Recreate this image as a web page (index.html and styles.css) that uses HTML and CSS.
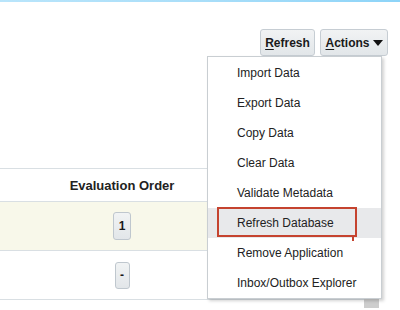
FILE: index.html
```html
<!DOCTYPE html>
<html lang="en">
<head>
    <meta charset="UTF-8">
    <title>Application Actions</title>
    <link rel="stylesheet" href="styles.css">
</head>
<body>
    <div class="topbar"></div>
    <div class="toolbar">
        <button class="tb-btn refresh"><span><u>R</u>efresh</span></button>
        <div class="actions-wrap">
            <button class="tb-btn actions"><span><u>A</u>ctions</span>
                <svg class="caret" width="10" height="6" viewBox="0 0 10 6"><path d="M0 0H10L5 6Z" fill="#111"/></svg>
            </button>
            <ul class="menu">
                <li>Import Data</li>
                <li>Export Data</li>
                <li>Copy Data</li>
                <li>Clear Data</li>
                <li>Validate Metadata</li>
                <li class="hover">Refresh Database<span class="callout"></span></li>
                <li>Remove Application</li>
                <li>Inbox/Outbox Explorer</li>
            </ul>
        </div>
    </div>
    <div class="table-area">
        <div class="table">
            <div class="row head">
                <div class="cell first"></div>
                <div class="cell order">Evaluation Order</div>
                <div class="cell rest"></div>
            </div>
            <div class="row selected">
                <div class="cell first"></div>
                <div class="cell order"><button class="ord-btn">1</button></div>
                <div class="cell rest"></div>
            </div>
            <div class="row">
                <div class="cell first"></div>
                <div class="cell order"><button class="ord-btn dash">-</button></div>
                <div class="cell rest"></div>
            </div>
        </div>
        <div class="scrollbar"><div class="thumb"></div></div>
    </div>
</body>
</html>
```

FILE: styles.css
```css
body {
    margin: 0;
    font-family: "Liberation Sans", Arial, sans-serif;
    color: #222;
    background: #fff;
    overflow: hidden;
}
.topbar {
    height: 2px;
    background: linear-gradient(to right, #b9e5fb, #a9def9 50%, #8dd4f8);
}
.toolbar {
    display: flex;
    justify-content: flex-end;
    gap: 5px;
    padding: 27px 12px 0 0;
}
.tb-btn {
    height: 27px;
    padding: 0;
    font-family: inherit;
    font-size: 12px;
    font-weight: bold;
    color: #1a1a1a;
    background: linear-gradient(#f1f3f4, #e2e6e9);
    border: 1px solid #c6cdd3;
    border-radius: 3px;
    display: flex;
    align-items: center;
    justify-content: center;
}
.tb-btn.refresh {
    width: 55px;
}
.tb-btn.actions {
    width: 68px;
}
.tb-btn u {
    text-decoration-thickness: 1px;
    text-underline-offset: 2px;
}
.actions-wrap {
    position: relative;
}
.caret {
    margin: 1px 0 0 3px;
}
.menu {
    position: absolute;
    top: 100%;
    right: 6px;
    width: 175px;
    box-sizing: border-box;
    margin: 0;
    padding: 1px 0 0;
    list-style: none;
    background: #fff;
    border: 1px solid #c9ced2;
    box-shadow: 2px 2px 3px rgba(0, 0, 0, 0.18);
    z-index: 10;
}
.menu li {
    position: relative;
    height: 30px;
    line-height: 30px;
    padding-left: 29px;
    font-size: 12px;
    white-space: nowrap;
}
.menu li.hover {
    background: #e8e9eb;
}
.callout {
    position: absolute;
    left: 9px;
    top: -1px;
    width: 140px;
    height: 30px;
    box-sizing: border-box;
    border: 2px solid #c5432f;
}
.callout::after {
    content: "";
    position: absolute;
    right: 1px;
    bottom: -6px;
    width: 2px;
    height: 5px;
    background: #c5432f;
}
.table-area {
    display: flex;
    margin-top: 112px;
}
.table {
    width: 364px;
}
.row {
    display: flex;
    height: 48px;
    border-bottom: 1px solid #d9dfe3;
}
.row.head {
    height: 32px;
    border-top: 1px solid #d9dfe3;
}
.row.selected {
    background: #f8f8ea;
}
.cell {
    display: flex;
    align-items: center;
    justify-content: center;
}
.cell.first {
    width: 36px;
}
.cell.order {
    width: 172px;
    font-size: 13px;
    font-weight: bold;
}
.cell.rest {
    flex: 1;
}
.ord-btn {
    height: 28px;
    width: 18px;
    padding: 0;
    font-family: inherit;
    font-size: 12px;
    font-weight: bold;
    color: #1a1a1a;
    background: linear-gradient(#f1f3f4, #e2e6e9);
    border: 1px solid #bfc7ce;
    border-radius: 3px;
}
.ord-btn.dash {
    width: 15px;
    height: 27px;
}
.scrollbar {
    width: 15px;
}
.thumb {
    margin-top: 131px;
    height: 9px;
    background: #cdcdcd;
}
```
